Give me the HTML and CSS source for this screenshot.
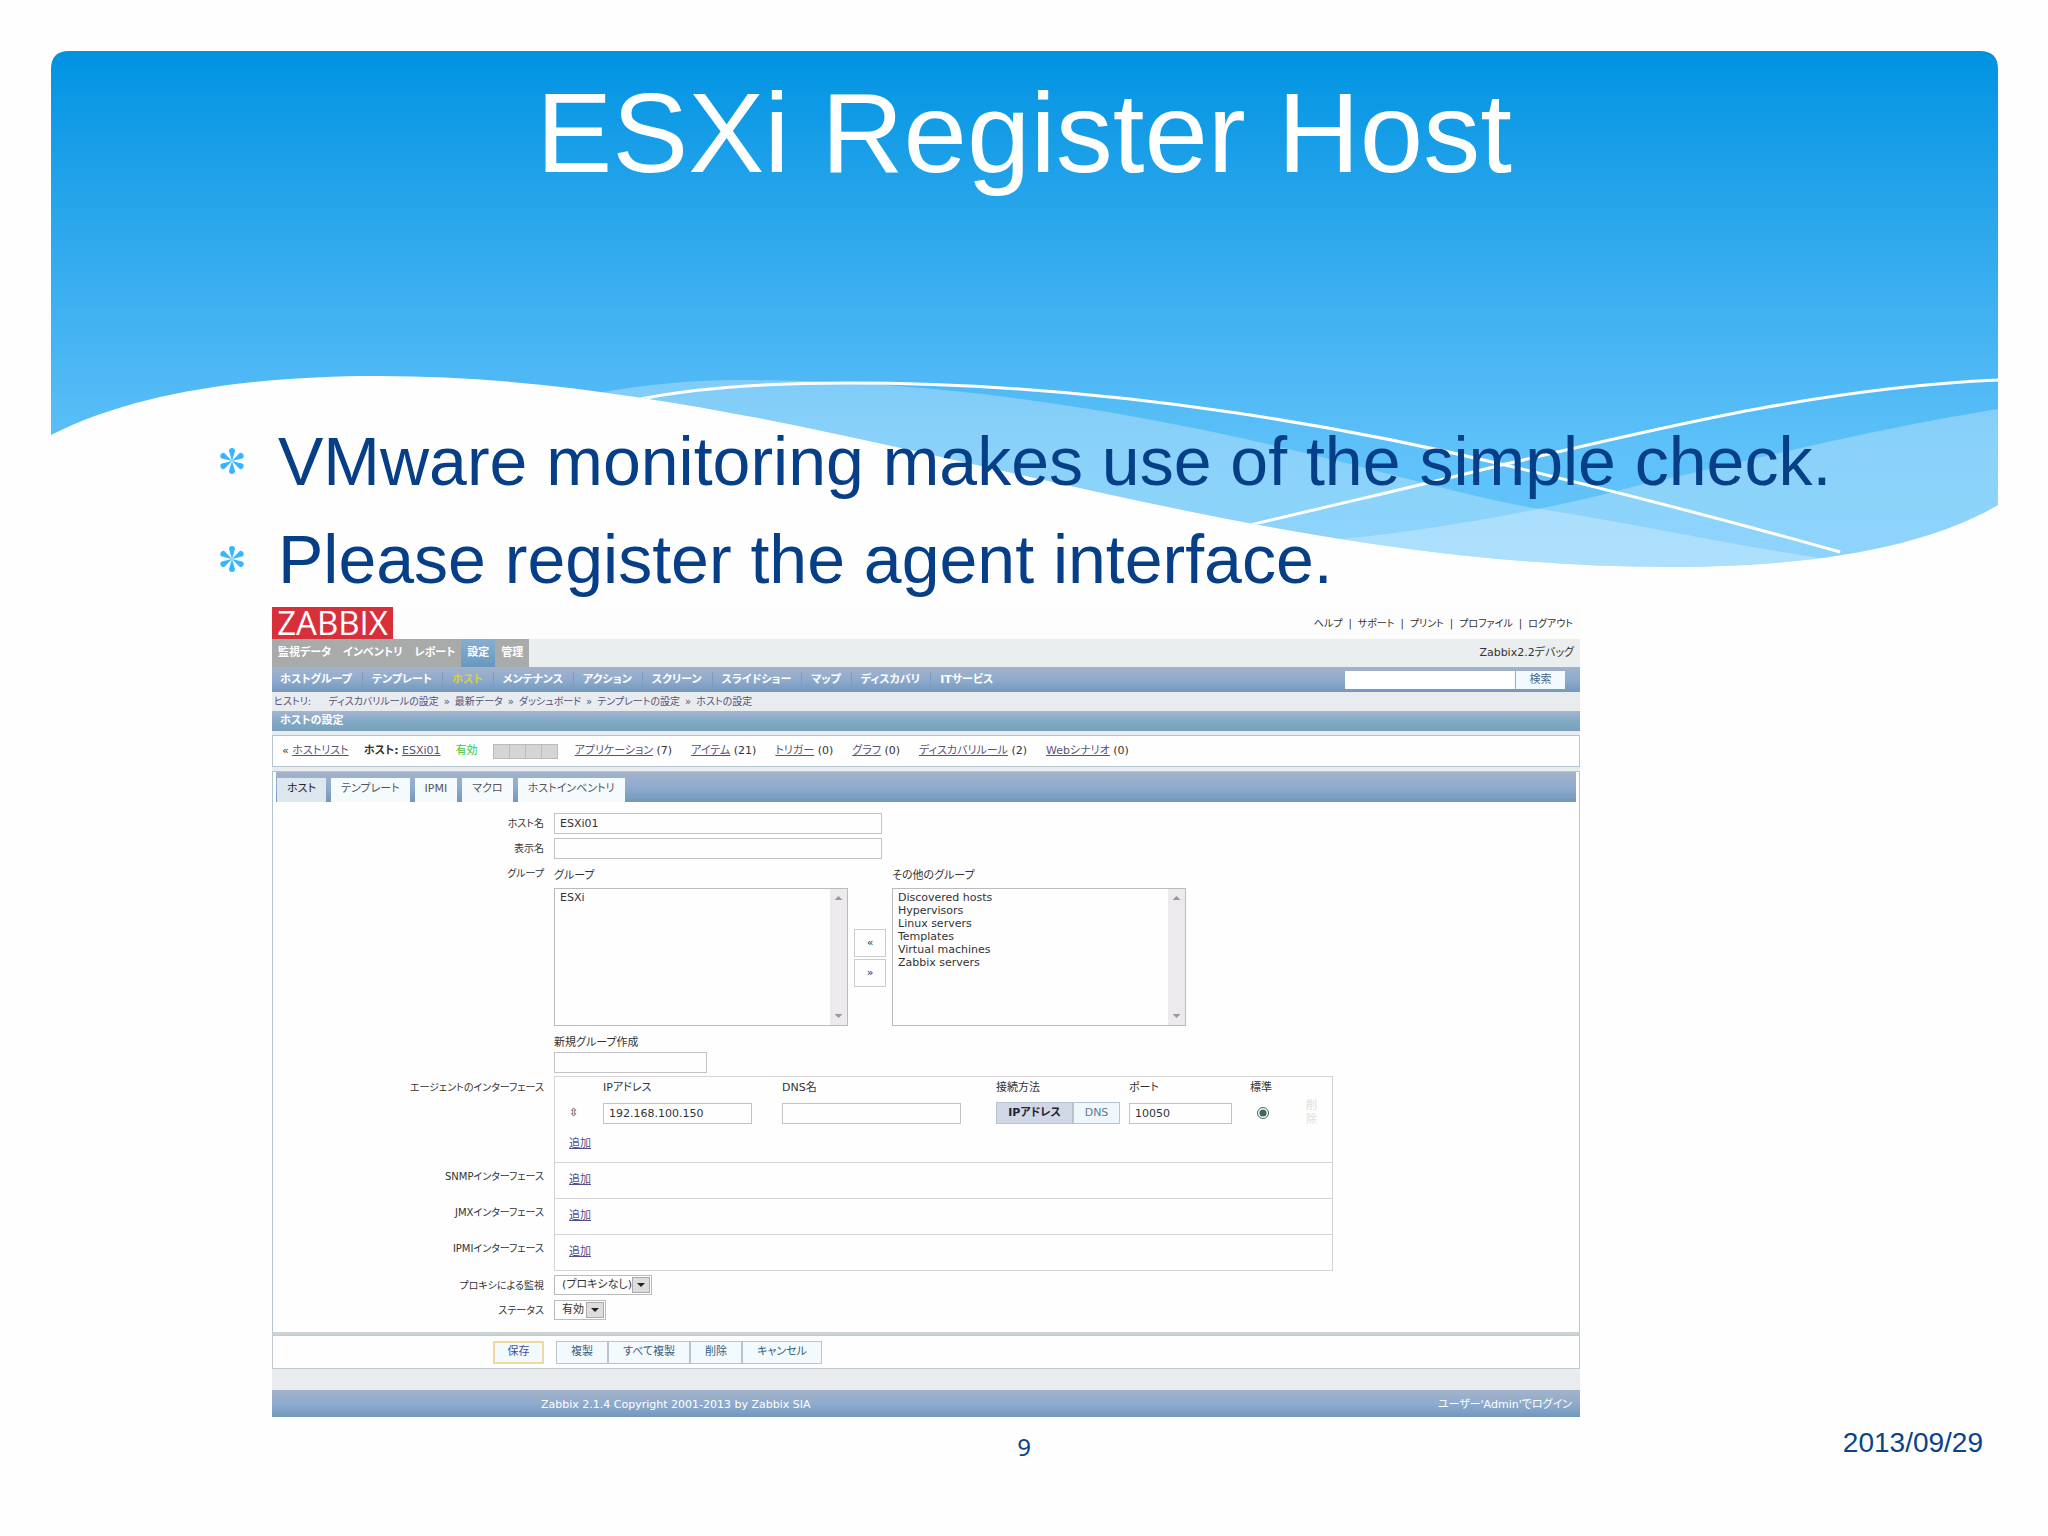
FILE: index.html
```html
<!DOCTYPE html>
<html lang="ja">
<head>
<meta charset="utf-8">
<title>ESXi Register Host</title>
<link rel="stylesheet" href="styles.css">
</head>
<body>
<main class="slide">
  <svg class="banner" viewBox="0 0 1948 518" preserveAspectRatio="none" aria-hidden="true">
    <defs>
      <linearGradient id="sky" x1="0" y1="0" x2="0" y2="1">
        <stop offset="0" stop-color="#0092df"/>
        <stop offset="0.06" stop-color="#0897e4"/>
        <stop offset="0.4" stop-color="#34abee"/>
        <stop offset="0.78" stop-color="#5fc1f9"/>
        <stop offset="1" stop-color="#62c4fb"/>
      </linearGradient>
      <clipPath id="edge">
        <path d="M0 384V18Q0 0 18 0H1930Q1948 0 1948 18V454C1880 494 1770 516 1621 516C1149 516 749 325 328 325C209 325 89 339 0 384Z"/>
      </clipPath>
    </defs>
    <g clip-path="url(#edge)">
      <rect width="1948" height="518" fill="url(#sky)"/>
      <path d="M540 343C600 333 640 329 690 329C900 329 1090 362 1255 402C1370 430 1420 446 1484 457C1580 472 1650 488 1739 502L1800 512V518H540Z" fill="#fff" fill-opacity=".28"/>
      <path d="M1948 358C1800 382 1680 415 1601 431C1520 453 1440 470 1320 485L1250 492V518H1948Z" fill="#fff" fill-opacity=".28"/>
      <path d="M590 348C650 336 720 332 798 332C1079 332 1329 384 1455 414C1567 441 1680 470 1790 501" fill="none" stroke="#fff" stroke-width="3"/>
      <path d="M1200 474C1300 450 1380 432 1451 414C1580 385 1760 337 1948 329" fill="none" stroke="#fff" stroke-width="3"/>
    </g>
  </svg>

  <h1 class="title">ESXi Register Host</h1>
  <ul class="points">
    <li><svg class="star" viewBox="-14 -14 28 28" aria-hidden="true"><g id="star"><path id="petal" d="M0 0L-3 -10A3 3 0 1 1 3 -10Z"/><use href="#petal" transform="rotate(60)"/><use href="#petal" transform="rotate(120)"/><use href="#petal" transform="rotate(180)"/><use href="#petal" transform="rotate(240)"/><use href="#petal" transform="rotate(300)"/></g></svg>VMware monitoring makes use of the simple check.</li>
    <li><svg class="star" viewBox="-14 -14 28 28" aria-hidden="true"><use href="#star"/></svg>Please register the agent interface.</li>
  </ul>

  <section class="zabbix">
    <header class="top">
      <a class="logo" href="#">ZABBIX</a>
      <nav class="help"><a href="#">ヘルプ</a><i>|</i><a href="#">サポート</a><i>|</i><a href="#">プリント</a><i>|</i><a href="#">プロファイル</a><i>|</i><a href="#">ログアウト</a></nav>
    </header>
    <div class="menu">
      <nav class="menu-tabs"><a href="#">監視データ</a><a href="#">インベントリ</a><a href="#">レポート</a><a class="on" href="#">設定</a><a href="#">管理</a></nav>
      <span>Zabbix2.2デバッグ</span>
    </div>
    <div class="bar submenu">
      <nav class="links"><a href="#">ホストグループ</a><a href="#">テンプレート</a><a class="on" href="#">ホスト</a><a href="#">メンテナンス</a><a href="#">アクション</a><a href="#">スクリーン</a><a href="#">スライドショー</a><a href="#">マップ</a><a href="#">ディスカバリ</a><a href="#">ITサービス</a></nav>
      <form class="search"><input type="text" aria-label="検索"><button type="button">検索</button></form>
    </div>
    <nav class="crumbs"><span>ヒストリ:</span><a href="#">ディスカバリルールの設定</a><i>»</i><a href="#">最新データ</a><i>»</i><a href="#">ダッシュボード</a><i>»</i><a href="#">テンプレートの設定</a><i>»</i><a href="#">ホストの設定</a></nav>
    <h2 class="bar heading">ホストの設定</h2>
    <div class="hostline">
      <span>« <a href="#">ホストリスト</a></span>
      <span><b>ホスト:</b> <a href="#">ESXi01</a></span>
      <span class="ok">有効</span>
      <span class="flags"><i></i><i></i><i></i><i></i></span>
      <div class="counts">
        <span><a href="#">アプリケーション</a> (7)</span>
        <span><a href="#">アイテム</a> (21)</span>
        <span><a href="#">トリガー</a> (0)</span>
        <span><a href="#">グラフ</a> (0)</span>
        <span><a href="#">ディスカバリルール</a> (2)</span>
        <span><a href="#">Webシナリオ</a> (0)</span>
      </div>
    </div>
    <div class="body">
      <nav class="bar tabs"><a class="on" href="#">ホスト</a><a href="#">テンプレート</a><a href="#">IPMI</a><a href="#">マクロ</a><a href="#">ホストインベントリ</a></nav>
      <form class="fields">
        <label for="host">ホスト名</label>
        <input class="wide" id="host" type="text" value="ESXi01">
        <label for="visible">表示名</label>
        <input class="wide" id="visible" type="text">
        <span class="name">グループ</span>
        <div class="groups">
          <div class="group"><label for="in">グループ</label>
            <div class="listbox"><select id="in" multiple><option>ESXi</option></select><span class="scroll"><i class="up"></i><i class="down"></i></span></div>
          </div>
          <div class="movers"><button type="button" aria-label="追加">«</button><button type="button" aria-label="解除">»</button></div>
          <div class="group"><label for="other">その他のグループ</label>
            <div class="listbox"><select id="other" multiple><option>Discovered hosts</option><option>Hypervisors</option><option>Linux servers</option><option>Templates</option><option>Virtual machines</option><option>Zabbix servers</option></select><span class="scroll"><i class="up"></i><i class="down"></i></span></div>
          </div>
        </div>
        <div class="newgroup"><label for="new">新規グループ作成</label><input id="new" type="text"></div>

        <span class="name">エージェントのインターフェース</span>
        <div class="box agent">
          <table>
            <thead><tr><th class="c-grip"></th><th class="c-ip">IPアドレス</th><th class="c-dns">DNS名</th><th class="c-by">接続方法</th><th class="c-port">ポート</th><th class="c-std">標準</th><th></th></tr></thead>
            <tbody><tr>
              <td class="grip">⇳</td>
              <td><input class="ip" type="text" value="192.168.100.150" aria-label="IPアドレス"></td>
              <td><input class="dns" type="text" aria-label="DNS名"></td>
              <td><span class="seg"><button class="on" type="button">IPアドレス</button><button type="button">DNS</button></span></td>
              <td><input class="port" type="text" value="10050" aria-label="ポート"></td>
              <td><input class="std" type="radio" checked aria-label="標準"></td>
              <td class="del">削<br>除</td>
            </tr></tbody>
          </table>
          <a href="#">追加</a>
        </div>
        <span class="name">SNMPインターフェース</span>
        <div class="box"><a href="#">追加</a></div>
        <span class="name">JMXインターフェース</span>
        <div class="box"><a href="#">追加</a></div>
        <span class="name">IPMIインターフェース</span>
        <div class="box last"><a href="#">追加</a></div>
        <label for="proxy">プロキシによる監視</label>
        <div class="pick"><select class="proxy" id="proxy"><option>(プロキシなし)</option></select><i></i></div>
        <label for="status">ステータス</label>
        <div class="pick"><select class="status" id="status"><option>有効</option></select><i></i></div>
      </form>
    </div>
    <div class="actions"><button class="save" type="button">保存</button><div class="joined"><button type="button">複製</button><button type="button">すべて複製</button><button type="button">削除</button><button type="button">キャンセル</button></div></div>
    <footer class="bar foot"><span>Zabbix 2.1.4 Copyright 2001-2013 by Zabbix SIA</span><span>ユーザー'Admin'でログイン</span></footer>
  </section>

  <footer class="slide-foot"><span></span><span class="page">9</span><time datetime="2013-09-29">2013/09/29</time></footer>
</main>
</body>
</html>
```
FILE: styles.css
```css
* { box-sizing: border-box; }
body { margin: 0; background: #fefefe; font-family: "Liberation Sans", Arial, sans-serif; }
a { color: inherit; text-decoration: none; }
i { font-style: normal; }

.slide { position: relative; padding: 51px 50px 0; }
.banner { position: absolute; left: 51px; top: 51px; width: calc(100% - 101px); height: 518px; }
.title { position: relative; margin: 0; padding-top: 16px; height: 361px; text-align: center; color: #fff; font-size: 114px; font-weight: 400; line-height: 132px; }
.points { position: relative; margin: 0; padding: 0 0 0 168px; list-style: none; color: #063f87; font-size: 68px; line-height: 98px; height: 195px; white-space: nowrap; }
.points li { display: flex; align-items: center; gap: 32px; height: 98px; }
.star { width: 28px; height: 28px; fill: #36b6ff; }

/* Zabbix host form */
.zabbix { margin: 0 418px 0 222px; background: #e9ecef; color: #333; font: 11px/16px "DejaVu Sans", "Noto Sans CJK JP", sans-serif; font-feature-settings: "palt"; white-space: nowrap; }
.zabbix input, .zabbix button, .zabbix select { font: inherit; font-feature-settings: inherit; color: inherit; margin: 0; border-radius: 0; }
.bar { background: linear-gradient(#a3b3c9, #8fabce 50%, #7298bb); color: #fff; }
.top { display: flex; justify-content: space-between; height: 32px; background: #fefdfe; }
.logo { width: 121px; background: #d8303a; color: #fff; font: 33px/32px "Open Sans", sans-serif; text-align: center; }
.help { display: flex; gap: 6px; padding: 9px 7px 0 0; font-size: 10px; }
.menu { display: flex; justify-content: space-between; height: 28px; background: #ebeeef; line-height: 28px; padding-right: 6px; }
.menu-tabs { display: flex; background: #a9aaaa; color: #fff; font-weight: 700; }
.menu-tabs a { padding: 0 6px; }
.menu-tabs .on { background: linear-gradient(#86b0d0, #6898c0); }
.submenu { display: flex; justify-content: space-between; align-items: center; height: 25px; padding: 0 15px 0 8px; font-weight: 700; }
.links { display: flex; gap: 10px; }
.links a + a { border-left: 1px solid #7d9dbd; padding-left: 9px; }
.links .on { color: #d5cf4a; }
.search { display: flex; height: 18px; font-weight: 400; }
.search input { width: 170px; border: 0; background: #fff; }
.search button { width: 50px; padding: 0; border: 0; border-left: 1px solid #aaa; background: #f2faff; color: #4a6b87; line-height: 16px; }
.crumbs { display: flex; gap: 5px; height: 19px; padding-left: 2px; color: #55507a; font-size: 10px; line-height: 19px; }
.crumbs span { margin-right: 12px; }
.heading { height: 20px; margin: 0 0 4px; padding-left: 8px; font-size: 11px; line-height: 19px; background: linear-gradient(#a5b4d0, #80a9c4 55%, #78a0bb); }
.hostline { display: flex; align-items: center; gap: 15px; height: 32px; padding-left: 9px; background: #fefefe; border: 1px solid #b5c5cf; }
.hostline a { text-decoration: underline; color: #5a5378; }
.hostline .ok { color: #3cc43c; }
.counts { display: flex; gap: 19px; padding-left: 2px; }
.flags { display: flex; gap: 1px; padding: 1px; background: #bbb; }
.flags i { width: 15px; height: 13px; background: #d5d5d5; }
.body { margin-top: 4px; padding: 0 3px 11px; background: #fefefe; border: 1px solid #b5c5cf; border-bottom: 3px solid #cdd4d8; }
.tabs { display: flex; align-items: flex-end; gap: 5px; height: 30px; padding-left: 1px; }
.tabs a { height: 24px; padding: 0 10px; background: #f5fafd; color: #555; line-height: 22px; }
.tabs .on { background: #dce7ee; color: #222; }

.fields { display: grid; grid-template-columns: 268px 1fr; column-gap: 10px; row-gap: 4px; padding-top: 11px; align-items: start; }
.fields > label, .name { text-align: right; font-size: 10px; line-height: 21px; }
.fields input { height: 21px; padding: 0 5px; border: 1px solid #c5c2c5; background: #fefefe; }
.fields .wide { width: 328px; }
.groups { display: flex; gap: 6px; }
.group label { display: block; height: 25px; line-height: 25px; }
.listbox { display: flex; width: 294px; height: 138px; border: 1px solid #bbb; background: #fefefe; }
.listbox select { flex: 1; height: 136px; padding: 2px 5px; border: 0; background: none; overflow: hidden; outline: 0; }
.listbox option { padding: 0; min-height: 13px; line-height: 13px; }
.scroll { display: flex; flex-direction: column; justify-content: space-between; align-items: center; width: 17px; padding: 7px 0; background: #eceaec; }
.up, .down { width: 8px; height: 4px; background: #999; clip-path: polygon(50% 0, 100% 100%, 0 100%); }
.down { clip-path: polygon(0 0, 100% 0, 50% 100%); }
.movers { display: flex; flex-direction: column; gap: 2px; padding-top: 66px; }
.movers button { width: 32px; height: 28px; padding: 0; border: 1px solid #ccc; background: #fefefe; }
.newgroup { grid-column: 2; margin-top: 4px; }
.newgroup label { display: block; line-height: 18px; }
.newgroup input { display: block; width: 153px; }
.box { width: 779px; height: 36px; margin-top: -4px; padding: 9px 14px; border: 1px solid #d6d3d8; border-bottom: 0; }
.box.agent { height: 86px; margin-top: -1px; padding: 0 0 0 14px; }
.box.last { height: 37px; border-bottom: 1px solid #d6d3d8; }
.box a { color: #50508c; text-decoration: underline; }
.box table { border-collapse: collapse; table-layout: fixed; width: 100%; margin-bottom: 9px; }
.box th { height: 22px; padding: 0; font-weight: 400; text-align: left; }
.box td { height: 28px; padding: 0; vertical-align: middle; }
.c-grip { width: 34px; } .c-ip { width: 179px; } .c-dns { width: 214px; } .c-by { width: 133px; } .c-port { width: 121px; } .c-std { width: 56px; }
.ip { width: 149px; } .dns { width: 179px; } .port { width: 103px; }
.box td input { display: block; }
.fields .std { width: 12px; height: 12px; margin: 0 7px; accent-color: #3d6862; }
.seg { display: flex; }
.seg button { width: 47px; height: 22px; padding: 0; border: 1px solid #b8c4cf; background: #eef7fc; color: #678; }
.seg .on { width: 77px; background: #cfd8e4; color: #223; font-weight: 700; }
.box .del { color: #ddd; line-height: 14px; }
.pick { position: relative; display: flex; width: max-content; height: 20px; border: 1px solid #bbb; background: #fefefe; }
.pick select { appearance: none; border: 0; padding: 0 7px; background: none; line-height: 18px; }
.pick i { position: absolute; right: 1px; top: 1px; width: 18px; height: 16px; background: #ddd; border: 1px solid #aaa; pointer-events: none; }
.pick i::after { content: ""; position: absolute; left: 4px; top: 5px; width: 8px; height: 4px; background: #222; clip-path: polygon(0 0, 100% 0, 50% 100%); }
.proxy { width: 96px; } .status { width: 50px; }
.actions { display: flex; gap: 12px; align-items: center; height: 34px; margin-bottom: 21px; padding-left: 220px; background: #fefefe; border: 1px solid #c2cad0; }
.actions button { height: 23px; padding: 0 14px; border: 1px solid #b9c6cf; background: #f2fafe; color: #34607c; }
.actions .save { width: 51px; border: 2px solid #f0d9a0; color: #3c4fa0; padding: 0; }
.joined { display: flex; }
.foot { display: flex; justify-content: space-between; height: 27px; padding: 0 8px 0 269px; line-height: 29px; }

.slide-foot { display: grid; grid-template-columns: 1fr auto 1fr; padding: 10px 15px 0; color: #0a4488; font-size: 28px; line-height: 32px; }
.slide-foot time { text-align: right; }
.page { padding-top: 4px; font: 24px/32px "Noto Sans", sans-serif; }
```
